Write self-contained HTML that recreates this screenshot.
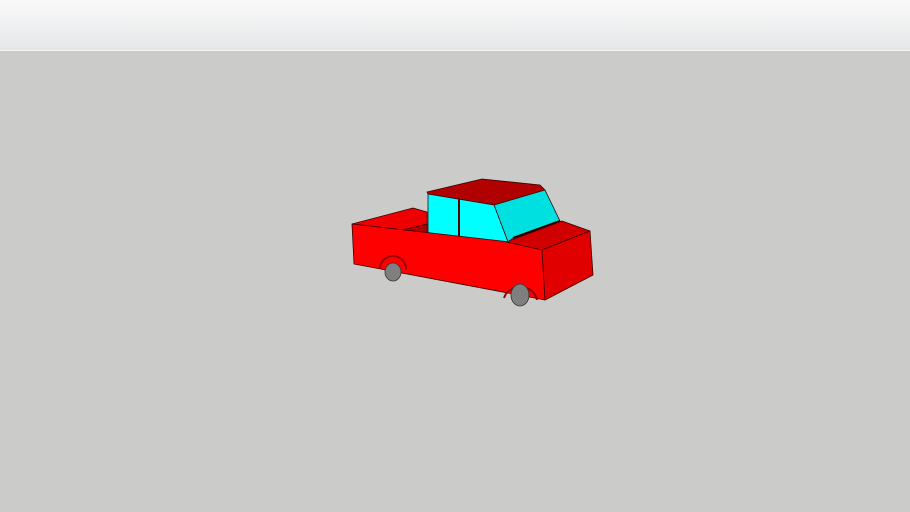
<!DOCTYPE html>
<html><head><style>
html,body{margin:0;padding:0;width:910px;height:512px;overflow:hidden;background:#cbcbc9}
.top{position:absolute;left:0;top:0;width:910px;height:50px;background:linear-gradient(#f9f9fa,#e6e7e8);border-bottom:1px solid #f4f4f4}
svg{position:absolute;left:0;top:0}
</style></head><body>
<div class="top"></div>
<svg width="910" height="512" viewBox="0 0 910 512" stroke="#3a0000" stroke-width="0.8" stroke-linejoin="round">
<polygon points="352,224 413,208 427,212 427,236" fill="#ee0000"/>
<polygon points="395,232 427,224 427,236 410,236" fill="#b00000"/>
<polygon points="427,192 482,179 540,185 545,190 494,205 428,194" fill="#b00000"/>
<polygon points="494,205 545,190 560,221 513,238 508,242" fill="#00e0e0"/>
<polygon points="428,194 494,205 508,242 428,236" fill="#00ffff"/>
<line x1="459" y1="198" x2="459" y2="240" stroke="#5a0000" stroke-width="2"/>
<line x1="513" y1="238" x2="560" y2="221" stroke="#200" stroke-width="2"/>
<polygon points="352,224 510,242 542,250 545,300 354,264" fill="#ff0000"/>
<polygon points="506,242 562,221 590,231 542,250" fill="#d00000"/>
<polygon points="542,250 590,231 593,275 545,300" fill="#e00000"/>
<path d="M380,268 A13,13 0 0 1 406,270" fill="none" stroke="#900" stroke-width="2"/>
<path d="M504,298 A17,16 0 0 1 537,300" fill="none" stroke="#900" stroke-width="2"/>
<ellipse cx="393" cy="272" rx="8" ry="9" fill="#7f7f7f" stroke="#333"/>
<ellipse cx="520" cy="295" rx="9" ry="11" fill="#7f7f7f" stroke="#333"/>
</svg>
</body></html>
